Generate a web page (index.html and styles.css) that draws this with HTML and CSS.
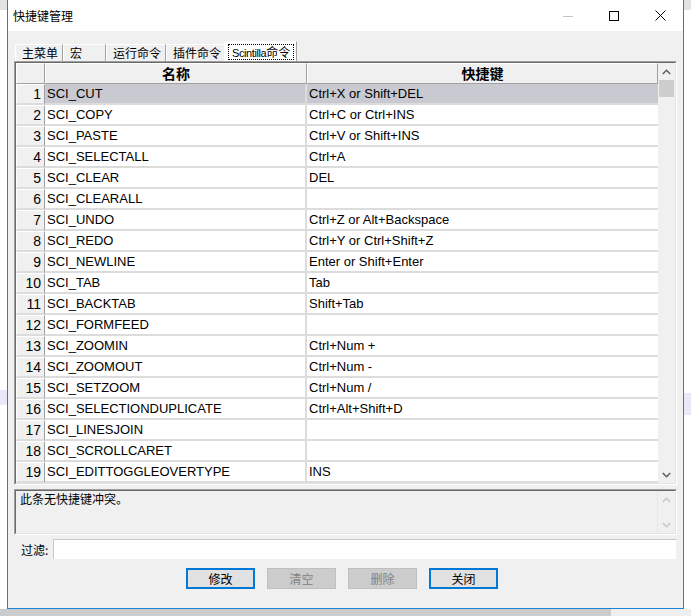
FILE: index.html
```html
<!DOCTYPE html>
<html lang="zh-CN">
<head>
  <meta charset="UTF-8">
  <title>快捷键管理</title>
  <link rel="stylesheet" href="styles.css">
</head>
<body>

<div class="desk">

  <div class="edge edgeLeft">
    <div class="edgeTop"></div>
    <div class="edgeMark"></div>
  </div>

  <div class="dialog">

    <div class="titlebar">
      <div class="title">快捷键管理</div>
      <div class="winBtn">
        <svg width="10" height="10" viewBox="0 0 10 10"><line x1="0" y1="5.5" x2="10" y2="5.5" stroke="#c4c4c4" stroke-width="1"/></svg>
      </div>
      <div class="winBtn">
        <svg width="10" height="10" viewBox="0 0 10 10"><rect x="0.5" y="0.5" width="9" height="9" fill="none" stroke="#000" stroke-width="1"/></svg>
      </div>
      <div class="winBtn">
        <svg width="11" height="11" viewBox="0 0 11 11"><path d="M0.5 0.5 L10.5 10.5 M10.5 0.5 L0.5 10.5" stroke="#000" stroke-width="1"/></svg>
      </div>
    </div>

    <div class="client">

      <div class="tabs">
        <div class="tab" style="width:48px">主菜单</div>
        <div class="tab" style="width:43px">宏</div>
        <div class="tab" style="width:60px">运行命令</div>
        <div class="tab" style="width:59px">插件命令</div>
        <div class="tab tabActive" style="width:73px"><span class="focusRect"><span class="latin">Scintilla</span>命令</span></div>
      </div>

      <div class="sunken grid">
        <div class="sunkenInner gridInner">
          <div class="list">
            <div class="row headRow">
              <div class="hcell cNum"></div>
              <div class="hcell cName">名称</div>
              <div class="hcell cKey">快捷键</div>
            </div>

            <div class="row selected"><div class="cell cNum">1</div><div class="cell cName">SCI_CUT</div><div class="cell cKey">Ctrl+X or Shift+DEL</div></div>
            <div class="row"><div class="cell cNum">2</div><div class="cell cName">SCI_COPY</div><div class="cell cKey">Ctrl+C or Ctrl+INS</div></div>
            <div class="row"><div class="cell cNum">3</div><div class="cell cName">SCI_PASTE</div><div class="cell cKey">Ctrl+V or Shift+INS</div></div>
            <div class="row"><div class="cell cNum">4</div><div class="cell cName">SCI_SELECTALL</div><div class="cell cKey">Ctrl+A</div></div>
            <div class="row"><div class="cell cNum">5</div><div class="cell cName">SCI_CLEAR</div><div class="cell cKey">DEL</div></div>
            <div class="row"><div class="cell cNum">6</div><div class="cell cName">SCI_CLEARALL</div><div class="cell cKey"></div></div>
            <div class="row"><div class="cell cNum">7</div><div class="cell cName">SCI_UNDO</div><div class="cell cKey">Ctrl+Z or Alt+Backspace</div></div>
            <div class="row"><div class="cell cNum">8</div><div class="cell cName">SCI_REDO</div><div class="cell cKey">Ctrl+Y or Ctrl+Shift+Z</div></div>
            <div class="row"><div class="cell cNum">9</div><div class="cell cName">SCI_NEWLINE</div><div class="cell cKey">Enter or Shift+Enter</div></div>
            <div class="row"><div class="cell cNum">10</div><div class="cell cName">SCI_TAB</div><div class="cell cKey">Tab</div></div>
            <div class="row"><div class="cell cNum">11</div><div class="cell cName">SCI_BACKTAB</div><div class="cell cKey">Shift+Tab</div></div>
            <div class="row"><div class="cell cNum">12</div><div class="cell cName">SCI_FORMFEED</div><div class="cell cKey"></div></div>
            <div class="row"><div class="cell cNum">13</div><div class="cell cName">SCI_ZOOMIN</div><div class="cell cKey">Ctrl+Num +</div></div>
            <div class="row"><div class="cell cNum">14</div><div class="cell cName">SCI_ZOOMOUT</div><div class="cell cKey">Ctrl+Num -</div></div>
            <div class="row"><div class="cell cNum">15</div><div class="cell cName">SCI_SETZOOM</div><div class="cell cKey">Ctrl+Num /</div></div>
            <div class="row"><div class="cell cNum">16</div><div class="cell cName">SCI_SELECTIONDUPLICATE</div><div class="cell cKey">Ctrl+Alt+Shift+D</div></div>
            <div class="row"><div class="cell cNum">17</div><div class="cell cName">SCI_LINESJOIN</div><div class="cell cKey"></div></div>
            <div class="row"><div class="cell cNum">18</div><div class="cell cName">SCI_SCROLLCARET</div><div class="cell cKey"></div></div>
            <div class="row"><div class="cell cNum">19</div><div class="cell cName">SCI_EDITTOGGLEOVERTYPE</div><div class="cell cKey">INS</div></div>
          </div>

          <div class="vscroll">
            <div class="arrow">
              <svg width="9" height="6" viewBox="0 0 9 6"><polyline points="0.8,5 4.5,1.3 8.2,5" fill="none" stroke="#606060" stroke-width="1.6"/></svg>
            </div>
            <div class="thumb"></div>
            <div class="track"></div>
            <div class="arrow">
              <svg width="9" height="6" viewBox="0 0 9 6"><polyline points="0.8,1 4.5,4.7 8.2,1" fill="none" stroke="#606060" stroke-width="1.6"/></svg>
            </div>
          </div>
        </div>
      </div>

      <div class="sunken info">
        <div class="sunkenInner infoInner">
          <div class="infoText">此条无快捷键冲突。</div>
          <div class="vscroll infoScroll">
            <div class="arrow">
              <svg width="9" height="6" viewBox="0 0 9 6"><polyline points="0.8,5 4.5,1.3 8.2,5" fill="none" stroke="#c6c6c6" stroke-width="1.4"/></svg>
            </div>
            <div class="track"></div>
            <div class="arrow">
              <svg width="9" height="6" viewBox="0 0 9 6"><polyline points="0.8,1 4.5,4.7 8.2,1" fill="none" stroke="#c6c6c6" stroke-width="1.4"/></svg>
            </div>
          </div>
        </div>
      </div>

      <div class="filterRow">
        <div class="filterLabel">过滤:</div>
        <div class="filterInput"></div>
      </div>

      <div class="buttons">
        <div class="btn btnDefault">修改</div>
        <div class="btn btnDisabled">清空</div>
        <div class="btn btnDisabled">删除</div>
        <div class="btn btnDefault">关闭</div>
      </div>

    </div>
  </div>

  <div class="edge edgeRight">
    <div class="edgeTop"></div>
    <div class="edgeMark"></div>
  </div>

</div>

<div class="taskStrip">
  <div class="taskStripDark"></div>
</div>

</body>
</html>
```

FILE: styles.css
```css
    body {
      margin: 0;
      width: 691px;
      height: 616px;
      overflow: hidden;
      background-color: #fff;
      font-family: "Liberation Sans", "Noto Sans CJK SC", sans-serif;
      color: #000;
    }

    .desk {
      display: flex;
      height: 609px;
    }

    /* bits of the editor window showing behind the dialog */
    .edge {
      width: 7px;
      display: flex;
      flex-direction: column;
    }

    .edgeTop {
      height: 10px;
      background-color: #e2e2e2;
    }

    .edgeLeft .edgeMark {
      margin-top: 380px;
      height: 15px;
      background-color: #e8e8f8;
    }

    .edgeRight .edgeMark {
      margin-top: 383px;
      height: 22px;
      background-color: #e8e8f8;
    }

    .dialog {
      width: 677px;
      box-sizing: border-box;
      border: 1px solid #1883d7;
      border-top: 0;
      display: flex;
      flex-direction: column;
    }

    .titlebar {
      height: 31px;
      background-color: #fff;
      display: flex;
      align-items: center;
    }

    .title {
      flex: 1;
      padding-left: 5px;
      padding-bottom: 1px;
      font-family: "Noto Sans CJK SC", sans-serif;
      font-size: 12px;
    }

    .winBtn {
      width: 46px;
      height: 31px;
      display: flex;
      align-items: center;
      justify-content: center;
    }

    .client {
      flex: 1;
      background-color: #f0f0f0;
      padding: 10px 6px 0 6px;
      display: flex;
      flex-direction: column;
      font-family: "Noto Sans CJK SC", sans-serif;
      font-size: 12px;
    }

    /* tabs */
    .tabs {
      display: flex;
      align-items: flex-end;
      height: 20px;
      margin-left: 1px;
    }

    .tab {
      height: 17px;
      box-sizing: border-box;
      border-top: 1px solid #fff;
      border-left: 1px solid #fff;
      border-right: 1px solid #a0a0a0;
      padding-left: 6px;
      line-height: 15px;
      white-space: nowrap;
    }

    .tabActive {
      height: 20px;
      margin-left: -1px;
      background-color: #fff;
      padding: 2px 2px 0 3px;
      line-height: 14px;
    }

    .focusRect {
      display: block;
      height: 16px;
      box-sizing: border-box;
      border: 1px dotted #000;
      padding-left: 3px;
      line-height: 14px;
      overflow: hidden;
    }

    .latin {
      font-family: "Liberation Sans", sans-serif;
      font-size: 11px;
      letter-spacing: -0.4px;
    }

    /* sunken frames */
    .sunken {
      box-sizing: border-box;
      border: 1px solid;
      border-color: #a0a0a0 #fff #fff #a0a0a0;
    }

    .sunkenInner {
      height: 100%;
      box-sizing: border-box;
      border: 1px solid;
      border-color: #696969 #e3e3e3 #e3e3e3 #696969;
      display: flex;
    }

    .grid {
      height: 424px;
    }

    .list {
      width: 642px;
      background-color: #fff;
    }

    .row {
      display: flex;
      height: 21px;
    }

    .cell, .hcell {
      box-sizing: border-box;
      white-space: nowrap;
      overflow: hidden;
    }

    .cNum { width: 29px; }
    .cName { width: 262px; }
    .cKey { width: 351px; }

    .headRow .hcell {
      background-color: #f0f0f0;
      border-top: 1px solid #fff;
      border-left: 1px solid #fff;
      border-right: 1px solid #a0a0a0;
      border-bottom: 1px solid #a0a0a0;
      text-align: center;
      font-family: "Noto Sans CJK SC", sans-serif;
      font-weight: bold;
      font-size: 14px;
      line-height: 18px;
    }

    .cell {
      font-family: "Liberation Sans", sans-serif;
      font-size: 13px;
      line-height: 20px;
      border-bottom: 2px solid #dcdcdc;
      padding-left: 2px;
    }

    .cell.cNum {
      background-color: #f0f0f0;
      border: 1px solid #a0a0a0;
      border-top-color: #fff;
      border-left-color: #fff;
      border-bottom: 2px solid #dcdcdc;
      text-align: right;
      padding: 0 3px 0 0;
      line-height: 19px;
      font-size: 14px;
    }

    .cell.cName {
      border-right: 2px solid #dcdcdc;
    }

    .selected .cName, .selected .cKey {
      background-color: #c9c9d1;
    }

    .vscroll {
      width: 17px;
      background-color: #f0f0f0;
      display: flex;
      flex-direction: column;
    }

    .arrow {
      height: 17px;
      display: flex;
      align-items: center;
      justify-content: center;
    }

    .thumb {
      height: 17px;
      margin: 0 1px;
      background-color: #cdcdcd;
    }

    .track {
      flex: 1;
    }

    /* conflict info */
    .info {
      margin-top: 4px;
      height: 46px;
    }

    .infoText {
      flex: 1;
      padding: 1px 4px;
      line-height: 14px;
    }

    .infoScroll {
      border-left: 1px solid #e6e6e6;
    }

    .filterRow {
      margin-top: 4px;
      height: 20px;
      display: flex;
      align-items: center;
    }

    .filterLabel {
      width: 39px;
      padding-left: 7px;
      box-sizing: border-box;
    }

    .filterInput {
      flex: 1;
      height: 20px;
      box-sizing: border-box;
      margin-right: 1px;
      background-color: #fff;
      border-top: 1px solid #c8c8c8;
      border-left: 1px solid #c8c8c8;
    }

    .buttons {
      margin-top: 9px;
      padding-left: 172px;
      display: flex;
      gap: 12px;
    }

    .btn {
      width: 69px;
      height: 21px;
      box-sizing: border-box;
      display: flex;
      align-items: center;
      justify-content: center;
    }

    .btnDefault {
      background-color: #e1e1e1;
      border: 2px solid #0078d7;
    }

    .btnDisabled {
      background-color: #cccccc;
      border: 1px solid #bfbfbf;
      color: #838383;
    }

    .taskStrip {
      height: 7px;
      background-color: #efefef;
    }

    .taskStripDark {
      width: 611px;
      height: 7px;
      background-color: #cccccc;
    }
```
